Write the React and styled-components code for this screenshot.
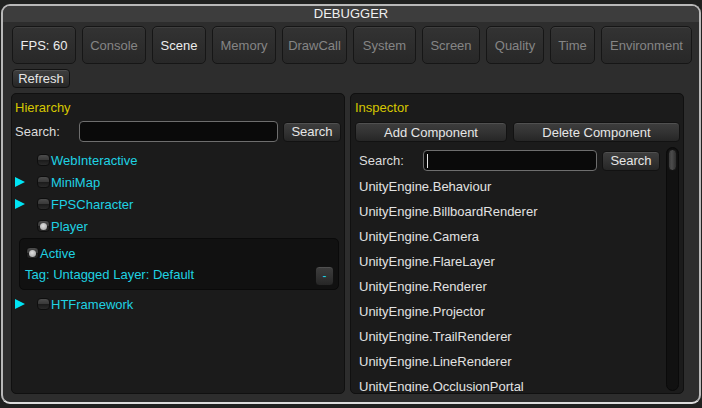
import React from "react";
import styled, { createGlobalStyle } from "styled-components";

const Global = createGlobalStyle`
  html, body { margin: 0; padding: 0; background: #222322; }
  body { font-family: "Liberation Sans", Arial, sans-serif; font-size: 13px; }
  #root { width: 702px; height: 408px; overflow: hidden; background: #222322; }
`;

const Page = styled.div`
  width: 702px;
  height: 408px;
  padding: 4px 1px 0 1px;
  box-sizing: border-box;
  background: #202120;
`;

const Window = styled.div`
  width: 700px;
  height: 400px;
  box-sizing: border-box;
  border: 2px solid #b9b9b9;
  border-bottom-color: #dcdcdc;
  border-radius: 9px;
  background: #2d2d2d;
  overflow: hidden;
  display: flex;
  flex-direction: column;
`;

const TitleBar = styled.div`
  height: 16px;
  background: #3d3d3d;
  color: #f0f0f0;
  font-size: 13px;
  line-height: 16px;
  text-align: center;
  flex: none;
`;

const Body = styled.div`
  padding: 4px 0 0 9px;
  display: flex;
  flex-direction: column;
  align-items: flex-start;
`;

const TabRow = styled.div`
  display: flex;
  gap: 6px;
  height: 38px;
`;

const Tab = styled.div`
  box-sizing: border-box;
  height: 38px;
  width: ${(p) => p.w}px;
  border: 1px solid #161616;
  border-radius: 5px;
  background: linear-gradient(#333333, #282828);
  box-shadow: inset 0 1px 0 rgba(255, 255, 255, 0.06);
  color: ${(p) => (p.active ? "#ececec" : "#858585")};
  display: flex;
  align-items: center;
  justify-content: center;
  font-size: 13px;
`;

const Btn = styled.div`
  box-sizing: border-box;
  width: ${(p) => p.w}px;
  height: ${(p) => p.h || 20}px;
  border: 1px solid #121212;
  border-radius: 4px;
  background: linear-gradient(#3e3e3e 0%, #333333 50%, #262626 100%);
  box-shadow: inset 0 1px 0 rgba(255, 255, 255, 0.1);
  color: #e6e6e6;
  display: flex;
  align-items: center;
  justify-content: center;
  font-size: 13px;
  flex: none;
`;

const RefreshBtn = styled(Btn)`
  margin-top: 5px;
`;

const Panels = styled.div`
  margin-top: 5px;
  margin-left: -1px;
  display: flex;
  gap: 5px;
`;

const Panel = styled.div`
  box-sizing: border-box;
  width: 334px;
  height: 301px;
  background: #1b1b1b;
  border: 1px solid #101010;
  border-radius: 5px;
  padding: 6px 3px 0 3px;
  display: flex;
  flex-direction: column;
  overflow: hidden;
`;

const PanelTitle = styled.div`
  color: #d6c700;
  font-size: 13px;
  line-height: 15px;
  height: 15px;
  padding-left: ${(p) => p.pl || 0}px;
`;

const SearchRow = styled.div`
  display: flex;
  align-items: center;
  margin-top: ${(p) => p.mt}px;
  height: 21px;
`;

const Label = styled.span`
  color: #dcdcdc;
  width: ${(p) => p.w}px;
  flex: none;
`;

const Input = styled.div`
  box-sizing: border-box;
  width: ${(p) => p.w}px;
  height: 21px;
  background: #0a0a0a;
  border: 1px solid #6e6e6e;
  border-radius: 4px;
  margin-right: 5px;
  flex: none;
  display: flex;
  align-items: center;
  padding-left: 3px;
`;

const Caret = styled.span`
  width: 1px;
  height: 14px;
  background: #e6e6e6;
`;

const Tree = styled.div`
  margin-top: 7px;
  display: flex;
  flex-direction: column;
`;

const TreeRow = styled.div`
  height: 22px;
  display: flex;
  align-items: center;
  color: #1fd2e3;
`;

const Arrow = styled.span`
  width: 22px;
  flex: none;
  display: flex;
  align-items: center;
`;

const Toggle = styled.span`
  box-sizing: border-box;
  width: 13px;
  height: 12px;
  border-radius: 4px;
  border: 1px solid #0e0e0e;
  background: linear-gradient(#4c4c4c 0%, #3a3a3a 45%, #1c1c1c 55%, #2a2a2a 100%);
  margin-right: 1px;
  flex: none;
  display: flex;
  align-items: center;
  justify-content: center;
  &::after {
    content: "";
    display: ${(p) => (p.on ? "block" : "none")};
    width: 7px;
    height: 7px;
    border-radius: 50%;
    background: radial-gradient(circle at 45% 40%, #e0e0e0, #9a9a9a);
  }
`;

const Details = styled.div`
  box-sizing: border-box;
  margin: 1px 0 3px 4px;
  width: 320px;
  height: 52px;
  background: #111111;
  border: 1px solid #0a0a0a;
  border-radius: 5px;
  padding: 5px 4px 0 5px;
  display: flex;
  flex-direction: column;
`;

const DetailRow = styled.div`
  display: flex;
  align-items: center;
  justify-content: space-between;
  color: #1fd2e3;
  height: ${(p) => p.h}px;
  padding-left: ${(p) => p.pl || 0}px;
`;

const ToggleLabel = styled.span`
  display: flex;
  align-items: center;
`;

const MinusBtn = styled(Btn)`
  color: #1fd2e3;
  width: 19px;
  height: 20px;
  border-radius: 4px;
  margin-top: 2px;
  font-size: 12px;
`;

const ButtonRow = styled.div`
  display: flex;
  gap: 6px;
  margin-top: 7px;
  padding-left: 1px;
`;

const Scroller = styled.div`
  margin-top: 5px;
  display: flex;
  height: 245px;
`;

const ScrollContent = styled.div`
  width: 312px;
  height: 245px;
  padding-left: 5px;
  box-sizing: border-box;
  overflow: hidden;
  flex: none;
`;

const Item = styled.div`
  height: 25px;
  line-height: 25px;
  color: #e2e2e2;
  white-space: nowrap;
`;

const Track = styled.div`
  box-sizing: border-box;
  width: 13px;
  height: 244px;
  flex: none;
  background: #111111;
  border: 1px solid #0a0a0a;
  border-radius: 7px;
  padding: 1px;
`;

const Thumb = styled.div`
  height: 22px;
  border-radius: 6px;
  background: linear-gradient(90deg, #3a3a3a, #4c4c4c 40%, #2e2e2e);
  border: 1px solid #151515;
  box-sizing: border-box;
`;

const ItemList = styled.div`
  margin-top: 3px;
`;

const Tri = () => (
  <svg width="10" height="10" viewBox="0 0 10 10">
    <polygon points="0,0 10,5 0,10" fill="#00e4f4" />
  </svg>
);

const tabs = [
  ["FPS: 60", 64, true],
  ["Console", 64],
  ["Scene", 54, true],
  ["Memory", 64],
  ["DrawCall", 65],
  ["System", 63],
  ["Screen", 58],
  ["Quality", 58],
  ["Time", 45],
  ["Environment", 91],
];

const items = [
  "UnityEngine.Behaviour",
  "UnityEngine.BillboardRenderer",
  "UnityEngine.Camera",
  "UnityEngine.FlareLayer",
  "UnityEngine.Renderer",
  "UnityEngine.Projector",
  "UnityEngine.TrailRenderer",
  "UnityEngine.LineRenderer",
  "UnityEngine.OcclusionPortal",
];

export default function App() {
  return (
    <Page>
      <Global />
      <Window>
        <TitleBar>DEBUGGER</TitleBar>
        <Body>
          <TabRow>
            {tabs.map(([t, w, a]) => (
              <Tab key={t} w={w} active={a}>
                {t}
              </Tab>
            ))}
          </TabRow>
          <RefreshBtn w={58} h={19}>
            Refresh
          </RefreshBtn>
          <Panels>
            <Panel>
              <PanelTitle>Hierarchy</PanelTitle>
              <SearchRow mt={6}>
                <Label w={64}>Search:</Label>
                <Input w={199} />
                <Btn w={58}>Search</Btn>
              </SearchRow>
              <Tree>
                <TreeRow>
                  <Arrow />
                  <Toggle />
                  WebInteractive
                </TreeRow>
                <TreeRow>
                  <Arrow>
                    <Tri />
                  </Arrow>
                  <Toggle />
                  MiniMap
                </TreeRow>
                <TreeRow>
                  <Arrow>
                    <Tri />
                  </Arrow>
                  <Toggle />
                  FPSCharacter
                </TreeRow>
                <TreeRow>
                  <Arrow />
                  <Toggle on />
                  Player
                </TreeRow>
                <Details>
                  <DetailRow h={18} pl={1}>
                    <ToggleLabel>
                      <Toggle on />
                      Active
                    </ToggleLabel>
                  </DetailRow>
                  <DetailRow h={25}>
                    <span>Tag: Untagged Layer: Default</span>
                    <MinusBtn w={19}>-</MinusBtn>
                  </DetailRow>
                </Details>
                <TreeRow>
                  <Arrow>
                    <Tri />
                  </Arrow>
                  <Toggle />
                  HTFramework
                </TreeRow>
              </Tree>
            </Panel>
            <Panel>
              <PanelTitle pl={1}>Inspector</PanelTitle>
              <ButtonRow>
                <Btn w={152} h={20}>
                  Add Component
                </Btn>
                <Btn w={167} h={20}>
                  Delete Component
                </Btn>
              </ButtonRow>
              <Scroller>
                <ScrollContent>
                  <SearchRow mt={3}>
                    <Label w={64}>Search:</Label>
                    <Input w={174}>
                      <Caret />
                    </Input>
                    <Btn w={58}>Search</Btn>
                  </SearchRow>
                  <ItemList>
                    {items.map((i) => (
                      <Item key={i}>{i}</Item>
                    ))}
                  </ItemList>
                </ScrollContent>
                <Track>
                  <Thumb />
                </Track>
              </Scroller>
            </Panel>
          </Panels>
        </Body>
      </Window>
    </Page>
  );
}
